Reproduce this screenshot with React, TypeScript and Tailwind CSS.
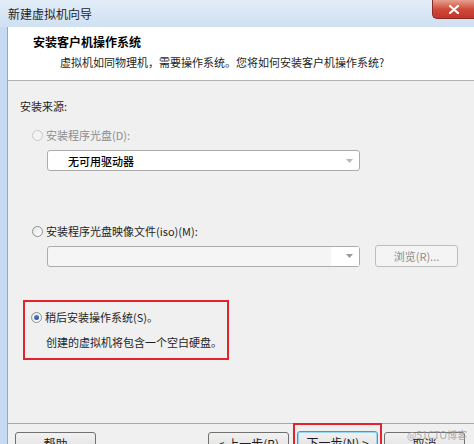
import React from 'react';

const font = { fontFamily: '"Microsoft YaHei", "Noto Sans CJK SC", "Noto Sans", sans-serif' };

const Radio = ({ checked, disabled }: { checked?: boolean; disabled?: boolean }) => (
  <span
    className={`relative inline-flex items-center justify-center w-[11px] h-[11px] rounded-full border ${
      disabled ? 'border-[#c8c8c8] bg-[#f3f3f3]' : 'border-[#8e8f8f] bg-gradient-to-br from-[#e6e6e6] to-[#ffffff]'
    }`}
  >
    {checked && <span className="w-[5px] h-[5px] rounded-full bg-gradient-to-br from-[#5b8fd0] to-[#1d4f91]"></span>}
  </span>
);

const Arrow = ({ light }: { light?: boolean }) => (
  <svg width="7" height="4" viewBox="0 0 7 4" className="mr-[6px]">
    <path d="M0 0 L7 0 L3.5 4 Z" fill={light ? '#b9b9b9' : '#9a9a9a'} />
  </svg>
);

const Btn = ({ children, focus }: { children: React.ReactNode; focus?: boolean }) => (
  <div
    className={`w-[81px] h-[23px] rounded-[3px] border flex items-center justify-center text-[12px] text-[#1e1e1e] whitespace-nowrap bg-gradient-to-b from-[#f2f2f2] to-[#dcdcdc] ${
      focus ? 'border-[#3c9bd6] shadow-[inset_0_0_0_1px_#9fd5f4]' : 'border-[#707070]'
    }`}
  >
    {children}
  </div>
);

export default function App() {
  return (
    <div className="w-[474px] h-[444px] overflow-hidden flex flex-col bg-[#f0f0f0] relative" style={font}>
      {/* title bar */}
      <div className="h-[27px] shrink-0 flex items-start justify-between bg-gradient-to-b from-[#e3edf8] to-[#cfe0f2]">
        <div className="pl-[8px] pt-[6px] text-[12px] text-[#1e1e1e] leading-[16px]">新建虚拟机向导</div>
        <div className="w-[42px] h-[19px] rounded-bl-[5px] border border-t-0 border-r-0 border-[#8b2a2a] bg-gradient-to-b from-[#e5a08f] via-[#cf4b3a] to-[#c2352a] flex items-center justify-center">
          <svg width="10" height="9" viewBox="0 0 10 9">
            <path d="M1 1 L9 8 M9 1 L1 8" stroke="#ffffff" strokeWidth="2.2" strokeLinecap="round" />
          </svg>
        </div>
      </div>

      <div className="flex flex-1 min-h-0">
        {/* left frame */}
        <div className="w-[8px] shrink-0 bg-[#c6dbf1] border-r border-[#8fa9c6]"></div>

        <div className="flex-1 flex flex-col min-w-0">
          {/* header */}
          <div className="h-[54px] shrink-0 bg-white border-b border-[#b4b4b4] pt-[7px]">
            <div className="pl-[25px] text-[12px] font-bold text-black leading-[16px]">安装客户机操作系统</div>
            <div className="pl-[52px] mt-[4px] text-[11px] text-[#1e1e1e] leading-[16px] whitespace-nowrap">
              虚拟机如同物理机，需要操作系统。您将如何安装客户机操作系统?
            </div>
          </div>

          {/* body */}
          <div className="h-[343px] shrink-0 bg-[#f0f0f0] border-b border-[#a9a9a9] pt-[17px] text-[11px] leading-[16px] text-[#1e1e1e]">
            <div className="pl-[12px]">安装来源:</div>

            <div className="mt-[13px] pl-[24px] flex items-center gap-[3px] text-[#8d8d8d]">
              <Radio disabled />
              <span>安装程序光盘(D):</span>
            </div>
            <div className="mt-[7px] ml-[39px] w-[313px] h-[21px] rounded-[3px] border border-[#acacac] bg-white flex items-center justify-between">
              <span className="pl-[20px] text-black font-medium">无可用驱动器</span>
              <Arrow light />
            </div>

            <div className="mt-[52px] pl-[24px] flex items-center gap-[3px]">
              <Radio />
              <span>安装程序光盘映像文件(iso)(M):</span>
            </div>
            <div className="mt-[6px] ml-[39px] flex items-center gap-[15px]">
              <div className="w-[313px] h-[21px] rounded-[3px] border border-[#acacac] bg-[#f5f5f5] flex items-center justify-end">
                <div className="h-full w-[28px] bg-white flex items-center justify-end">
                  <Arrow />
                </div>
              </div>
              <div className="w-[83px] h-[22px] rounded-[3px] border border-[#bdbdbd] bg-[#f4f4f4] flex items-center justify-center text-[#8d8d8d]">
                浏览(R)...
              </div>
            </div>

            <div className="mt-[33px] ml-[15px] w-[206px] h-[60px] border-2 border-[#e3222c] pt-[7px] whitespace-nowrap">
              <div className="pl-[6px] flex items-center gap-[3px]">
                <Radio checked />
                <span>稍后安装操作系统(S)。</span>
              </div>
              <div className="pl-[21px] mt-[9px]">创建的虚拟机将包含一个空白硬盘。</div>
            </div>
          </div>

          {/* footer */}
          <div className="flex-1 flex items-start pt-[8px] text-[12px]">
            <div className="ml-[7px]">
              <Btn>帮助</Btn>
            </div>
            <div className="ml-[112px]">
              <Btn>&lt; 上一步(B)</Btn>
            </div>
            <div className="ml-[4px] -mt-[9px] border-2 border-[#e3222c] px-[2px] pt-[6px] pb-[4px]">
              <Btn focus>下一步(N) &gt;</Btn>
            </div>
            <div className="ml-[2px]">
              <Btn>取消</Btn>
            </div>
          </div>
        </div>
      </div>

      <div className="absolute left-[407px] top-[427px] text-[10px] text-[#9a9a9a] opacity-80">@51CTO博客</div>
    </div>
  );
}
